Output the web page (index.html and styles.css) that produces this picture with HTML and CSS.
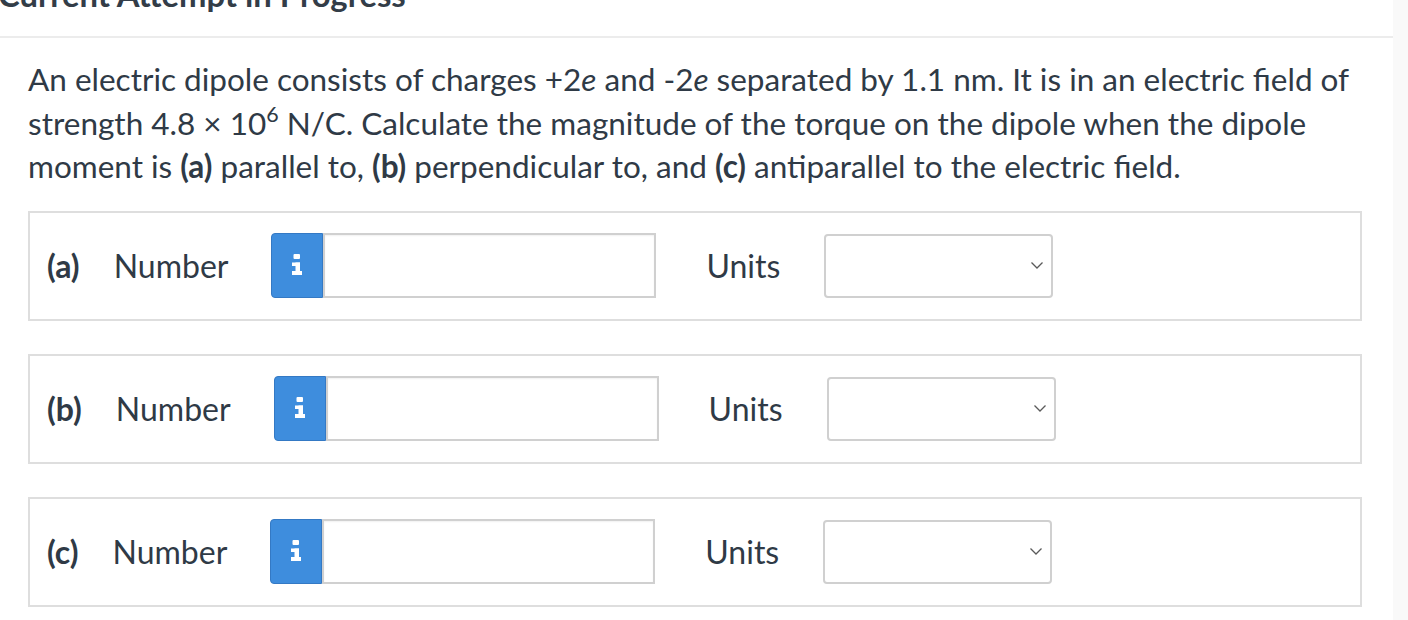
FILE: index.html
```html
<!DOCTYPE html>
<html lang="en">
<head>
<meta charset="utf-8">
<title>Current Attempt in Progress</title>
<link rel="stylesheet" href="styles.css">
</head>
<body>
<div class="page">
  <main class="content">
    <header class="attempt-head">
      <h2 class="attempt-title">Current Attempt in Progress</h2>
    </header>
    <section class="question">
      <p class="question-text">An electric dipole consists of charges +2<i>e</i> and -2<i>e</i> separated by 1.1 nm. It is in an electric field of strength 4.8 × 10<sup>6</sup> N/C. Calculate the magnitude of the torque on the dipole when the dipole moment is <b>(a)</b> parallel to, <b>(b)</b> perpendicular to, and <b>(c)</b> antiparallel to the electric field.</p>

      <div class="part">
        <span class="part-label">(a)</span>
        <span class="field-label">Number</span>
        <div class="input-group">
          <span class="info-btn"><svg class="info-icon" viewBox="0 0 10 21" width="10" height="21"><rect x="1.5" y="0" width="6.5" height="5" rx="1"/><rect x="0" y="8.5" width="8" height="3.5"/><rect x="3.5" y="8.5" width="4.5" height="10"/><rect x="0" y="17" width="10" height="4"/></svg></span>
          <span class="num-input"></span>
        </div>
        <span class="units-label">Units</span>
        <span class="units-select"><svg class="chevron" viewBox="0 0 12 7" width="12" height="7"><path d="M0.5 0.5 L6 6 L11.5 0.5"/></svg></span>
      </div>

      <div class="part">
        <span class="part-label">(b)</span>
        <span class="field-label">Number</span>
        <div class="input-group">
          <span class="info-btn"><svg class="info-icon" viewBox="0 0 10 21" width="10" height="21"><rect x="1.5" y="0" width="6.5" height="5" rx="1"/><rect x="0" y="8.5" width="8" height="3.5"/><rect x="3.5" y="8.5" width="4.5" height="10"/><rect x="0" y="17" width="10" height="4"/></svg></span>
          <span class="num-input"></span>
        </div>
        <span class="units-label">Units</span>
        <span class="units-select"><svg class="chevron" viewBox="0 0 12 7" width="12" height="7"><path d="M0.5 0.5 L6 6 L11.5 0.5"/></svg></span>
      </div>

      <div class="part">
        <span class="part-label">(c)</span>
        <span class="field-label">Number</span>
        <div class="input-group">
          <span class="info-btn"><svg class="info-icon" viewBox="0 0 10 21" width="10" height="21"><rect x="1.5" y="0" width="6.5" height="5" rx="1"/><rect x="0" y="8.5" width="8" height="3.5"/><rect x="3.5" y="8.5" width="4.5" height="10"/><rect x="0" y="17" width="10" height="4"/></svg></span>
          <span class="num-input"></span>
        </div>
        <span class="units-label">Units</span>
        <span class="units-select"><svg class="chevron" viewBox="0 0 12 7" width="12" height="7"><path d="M0.5 0.5 L6 6 L11.5 0.5"/></svg></span>
      </div>
    </section>
  </main>
  <div class="gutter"></div>
</div>
</body>
</html>
```

FILE: styles.css
```css
html, body {
  margin: 0;
  padding: 0;
  background: #ffffff;
}

body {
  font-family: Lato, "Open Sans", sans-serif;
  color: #2f3a46;
  overflow: hidden;
}

.page {
  display: flex;
  height: 620px;
  overflow: hidden;
}

.content {
  flex: 1;
  min-width: 0;
}

.gutter {
  width: 15px;
  flex: none;
  background: #f9f9f9;
}

.attempt-head {
  margin-top: -25px;
  padding-bottom: 21px;
  border-bottom: 2px solid #ececec;
}

.attempt-title {
  margin: 0 0 0 -2px;
  font-size: 32.8px;
  line-height: 40px;
  font-weight: 700;
  color: #333d48;
}

.question {
  padding: 20px 31px 0 28px;
}

.question-text {
  margin: 0 0 22px;
  font-size: 31.5px;
  line-height: 43.5px;
}

.question-text sup {
  font-size: 0.68em;
  line-height: 0;
  vertical-align: 0.6em;
}

.question-text b {
  font-weight: 700;
}

.part {
  display: flex;
  align-items: center;
  height: 66px;
  padding: 20px 0 20px 17px;
  border: 2px solid #dedede;
  font-size: 32px;
}

.part + .part {
  margin-top: 33px;
}

.part-label {
  font-weight: 700;
}

.field-label {
  margin-left: 34px;
}

.input-group {
  display: flex;
  margin-left: 43px;
  height: 65px;
}

.info-btn {
  width: 52px;
  height: 65px;
  box-sizing: border-box;
  display: flex;
  align-items: center;
  justify-content: center;
  background: #3e8ddd;
  border: 1px solid #3479c4;
  border-radius: 4px 0 0 4px;
  padding-bottom: 2px;
}

.info-icon {
  fill: #ffffff;
  display: block;
}

.num-input {
  width: 333px;
  height: 65px;
  box-sizing: border-box;
  border: 2px solid #d0d0d0;
  background: #ffffff;
  box-shadow: inset 0 1px 2px rgba(0, 0, 0, 0.06);
}

.units-label {
  margin-left: 50px;
}

.units-select {
  margin-left: 44px;
  width: 229px;
  height: 64px;
  box-sizing: border-box;
  border: 2px solid #d0d0d0;
  border-radius: 4px;
  display: flex;
  align-items: center;
  justify-content: flex-end;
  padding-right: 8px;
}

.chevron {
  display: block;
  fill: none;
  stroke: #5a5a5a;
  stroke-width: 1.3;
}
```
